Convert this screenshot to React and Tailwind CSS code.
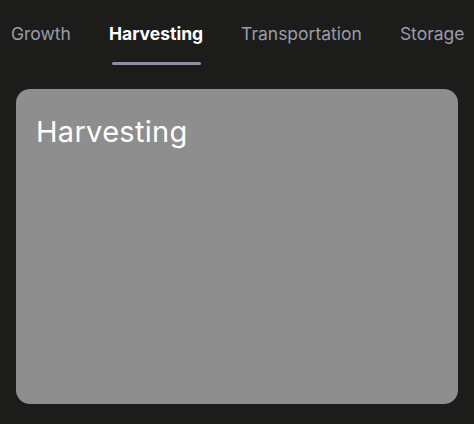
export default function App() {
  const tabs = ["Growth", "Harvesting", "Transportation", "Storage"];
  return (
    <div className="w-[474px] h-[424px] bg-[#1c1c1a] overflow-hidden flex flex-col" style={{ fontFamily: "Inter, 'Noto Sans', sans-serif" }}>
      <div className="flex items-start h-[89px] pl-[11px] pt-[23px] gap-[38px] whitespace-nowrap">
        {tabs.map((t) => (
          <div key={t} className="flex flex-col items-center">
            <span className={t === "Harvesting" ? "text-[17.5px] leading-[22px] font-bold text-white" : "text-[17.5px] leading-[22px] text-[#9a9cab]"}>{t}</span>
            {t === "Harvesting" && <div className="mt-[17px] h-[3px] w-[89px] rounded-full bg-[#8b90aa]" />}
          </div>
        ))}
      </div>
      <div className="mx-[16px] h-[315px] rounded-[14px] bg-[#8e8e8e] px-[20px] pt-[26px]">
        <div className="text-[29px] leading-[34px] tracking-[0.3px] text-white">Harvesting</div>
      </div>
    </div>
  );
}
